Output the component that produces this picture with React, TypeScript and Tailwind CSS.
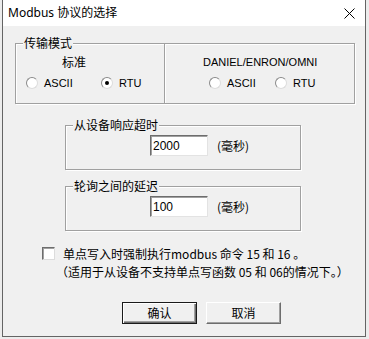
import React from 'react';

const cjk = { fontFamily: '"Noto Sans CJK SC", "Noto Sans", sans-serif' };
const latin = { fontFamily: '"Liberation Sans", "Noto Sans CJK SC", sans-serif' };

function Radio({ checked = false }: { checked?: boolean }) {
  return (
    <span className="relative flex h-[12px] w-[12px] shrink-0 items-center justify-center rounded-full border border-t-[#8a8a8a] border-l-[#8a8a8a] border-r-[#dcdcdc] border-b-[#dcdcdc] bg-white">
      {checked && <span className="h-[4px] w-[4px] rounded-full bg-black" />}
    </span>
  );
}

function RadioItem({ label, checked, width }: { label: string; checked?: boolean; width: string }) {
  return (
    <div className={`flex items-center gap-[6px] ${width}`}>
      <Radio checked={checked} />
      <span className="text-[11px] leading-[14px] text-black" style={latin}>
        {label}
      </span>
    </div>
  );
}

function GroupBox({ title, className, children }: { title: string; className?: string; children: React.ReactNode }) {
  return (
    <div className={`relative border border-[#a0a0a0] shadow-[inset_1px_1px_0_#fff,1px_1px_0_#fff] ${className ?? ''}`}>
      <span
        className="absolute left-[7px] -top-[8px] bg-[#f0f0f0] px-[1px] text-[12px] leading-[14px] text-black"
        style={cjk}
      >
        {title}
      </span>
      {children}
    </div>
  );
}

function TimeField({ value }: { value: string }) {
  return (
    <div className="flex items-center pl-[84px] pt-[9px]">
      <div className="flex h-[21px] w-[58px] items-center border border-t-[#6d6d6d] border-l-[#6d6d6d] border-r-[#e3e3e3] border-b-[#e3e3e3] bg-white pl-[2px] shadow-[inset_1px_1px_0_#a0a0a0]">
        <span className="text-[12px] leading-[14px] text-black" style={latin}>
          {value}
        </span>
      </div>
      <span className="ml-[9px] text-[12px] leading-[14px] text-black" style={cjk}>
        (毫秒)
      </span>
    </div>
  );
}

function WinButton({ label, primary }: { label: string; primary?: boolean }) {
  return (
    <button
      type="button"
      className={`flex h-[22px] w-[75px] items-center justify-center bg-[#f0f0f0] text-[12px] leading-[14px] text-black ${
        primary
          ? 'border border-[#1a1a1a] shadow-[inset_1px_1px_0_#fff,inset_-1px_-1px_0_#6d6d6d,inset_-2px_-2px_0_#a0a0a0]'
          : 'border border-t-white border-l-white border-r-[#6d6d6d] border-b-[#6d6d6d] shadow-[inset_-1px_-1px_0_#a0a0a0]'
      }`}
      style={cjk}
    >
      {label}
    </button>
  );
}

export default function App() {
  return (
    <div className="h-[339px] w-[369px] overflow-hidden bg-[#ececec]">
      <div className="ml-[2px] flex h-[337px] w-[364px] flex-col border-x border-b border-[#646464]">
        {/* title bar */}
        <div className="flex h-[26px] shrink-0 items-center justify-between bg-white pl-[5px] pr-[9px]">
          <span className="text-[12px] leading-[14px] text-black" style={{ fontFamily: '"Noto Sans", "Noto Sans CJK SC", sans-serif' }}>
            Modbus 协议的选择
          </span>
          <svg width="11" height="11" viewBox="0 0 11 11" className="mr-[1px]">
            <path d="M0.5 0.5 L10.5 10.5 M10.5 0.5 L0.5 10.5" stroke="#000" strokeWidth="1" fill="none" />
          </svg>
        </div>

        {/* body */}
        <div className="flex flex-1 flex-col bg-[#f0f0f0]">
          <GroupBox title="传输模式" className="ml-[12px] mt-[17px] h-[61px] w-[340px]">
            <div className="flex h-full">
              <div className="flex w-[148px] flex-col gap-[7px] pt-[11px]">
                <span className="pl-[46px] text-[12px] leading-[14px] text-black" style={cjk}>
                  标准
                </span>
                <div className="flex pl-[10px]">
                  <RadioItem label="ASCII" width="w-[75px]" />
                  <RadioItem label="RTU" checked width="w-[50px]" />
                </div>
              </div>
              <div className="h-full w-px bg-[#a0a0a0] shadow-[1px_0_0_#fff]" />
              <div className="flex flex-1 flex-col gap-[7px] pt-[11px]">
                <span className="pl-[38px] text-[11px] leading-[14px] text-black" style={latin}>
                  DANIEL/ENRON/OMNI
                </span>
                <div className="flex pl-[44px]">
                  <RadioItem label="ASCII" width="w-[66px]" />
                  <RadioItem label="RTU" width="w-[50px]" />
                </div>
              </div>
            </div>
          </GroupBox>

          <GroupBox title="从设备响应超时" className="ml-[62px] mt-[21px] h-[45px] w-[236px]">
            <TimeField value="2000" />
          </GroupBox>

          <GroupBox title="轮询之间的延迟" className="ml-[62px] mt-[16px] h-[45px] w-[236px]">
            <TimeField value="100" />
          </GroupBox>

          <div className="mt-[16px] flex flex-col">
            <div className="ml-[39px] flex h-[13px] items-center gap-[8px]">
              <span className="h-[13px] w-[13px] shrink-0 border border-t-[#6d6d6d] border-l-[#6d6d6d] border-r-[#dcdcdc] border-b-[#dcdcdc] bg-white shadow-[inset_1px_1px_0_#a0a0a0]" />
              <span className="text-[12px] leading-[14px] text-black" style={cjk}>
                单点写入时强制执行modbus 命令 15 和 16 。
              </span>
            </div>
            <span className="ml-[53px] mt-[5px] h-[14px] text-[12px] leading-[14px] text-black" style={cjk}>
              （适用于从设备不支持单点写函数 05 和 06的情况下。）
            </span>
          </div>

          <div className="ml-[119px] mt-[23px] flex gap-[9px]">
            <WinButton label="确认" primary />
            <WinButton label="取消" />
          </div>
        </div>
      </div>
    </div>
  );
}
